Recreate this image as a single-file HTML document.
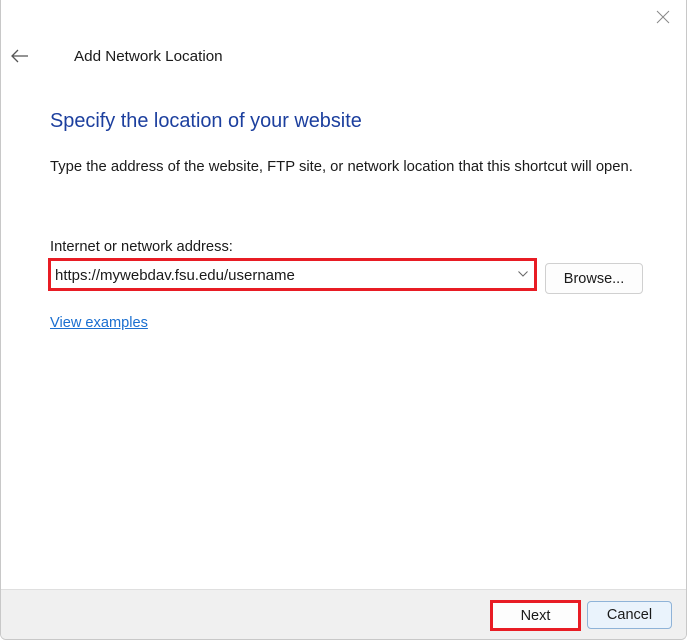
<!DOCTYPE html>
<html><head><style>
*{margin:0;padding:0;box-sizing:border-box}
body{width:687px;height:640px;background:#fff;font-family:"Liberation Sans",sans-serif;color:#1a1a1a;position:relative;overflow:hidden}
.win{position:absolute;left:0;top:0;width:687px;height:640px;border:1px solid #c8c8c8;border-top:none;border-radius:0 0 6px 6px;overflow:hidden}
.t{position:absolute;white-space:nowrap}
.footer{position:absolute;left:-1px;top:589px;width:687px;height:51px;background:#f0f0f0;border-top:1px solid #dfdfdf}
.btn{position:absolute;background:#fdfdfd;border:1px solid #d0d0d0;border-radius:4px;font-size:14.5px;text-align:center}
</style></head><body>
<div class="win">
<svg class="t" style="left:655px;top:10px" width="14" height="14"><path d="M1 1L13 13M13 1L1 13" stroke="#888" stroke-width="1"/></svg>
<svg class="t" style="left:10px;top:49px" width="18" height="14"><path d="M1 7H17M7 1L1 7L7 13" stroke="#555" stroke-width="1.3" fill="none"/></svg>
<div class="t" style="left:73px;top:48px;font-size:15.2px">Add Network Location</div>
<div class="t" style="left:49px;top:110px;font-size:19.9px;color:#1c3f9e">Specify the location of your website</div>
<div class="t" style="left:49px;top:159px;font-size:14.8px">Type the address of the website, FTP site, or network location that this shortcut will open.</div>
<div class="t" style="left:49px;top:239px;font-size:14.7px">Internet or network address:</div>
<div class="t" style="left:47px;top:258px;width:489px;height:33px;border:3px solid #e81c24;background:#fff"></div>
<div class="t" style="left:54px;top:267px;font-size:15px">https://mywebdav.fsu.edu/username</div>
<svg class="t" style="left:517px;top:271px" width="10" height="6"><path d="M0.5 0.5L5 5L9.5 0.5" stroke="#666" fill="none"/></svg>
<div class="btn" style="left:544px;top:263px;width:98px;height:31px;line-height:30px">Browse...</div>
<div class="t" style="left:49px;top:315px;font-size:14.6px;color:#1a6fd0;text-decoration:underline">View examples</div>
<div class="footer"></div>
<div class="t" style="left:489px;top:600px;width:91px;height:31px;border:3px solid #e81c24;background:#fdfdfd;font-size:14.5px;text-align:center;line-height:26px">Next</div>
<div class="btn" style="left:586px;top:601px;width:85px;height:28px;line-height:27px;background:#eaf3fc;border-color:#8fb3d8">Cancel</div>
</div>
</body></html>
